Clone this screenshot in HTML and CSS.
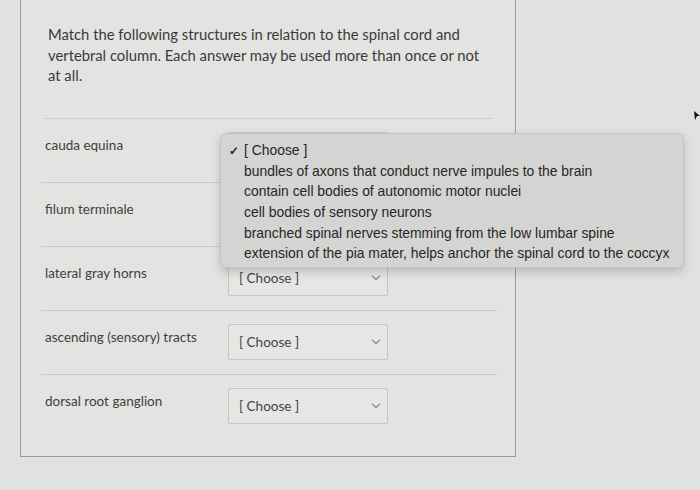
FILE: index.html
```html
<!DOCTYPE html>
<html>
<head>
<meta charset="utf-8">
<link rel="stylesheet" href="styles.css">
</head>
<body>
<div class="panel">
  <p class="question">Match the following structures in relation to the spinal cord and vertebral column. Each answer may be used more than once or not at all.</p>
  <div class="rule"></div>
  <div class="row"><span class="label">cauda equina</span><div class="select"><span>[ Choose ]</span><span class="chev"></span></div></div>
  <div class="row"><span class="label">filum terminale</span><div class="select"><span>[ Choose ]</span><span class="chev"></span></div></div>
  <div class="row"><span class="label">lateral gray horns</span><div class="select"><span>[ Choose ]</span><span class="chev"></span></div></div>
  <div class="row"><span class="label">ascending (sensory) tracts</span><div class="select"><span>[ Choose ]</span><span class="chev"></span></div></div>
  <div class="row last"><span class="label">dorsal root ganglion</span><div class="select"><span>[ Choose ]</span><span class="chev"></span></div></div>
</div>
<div class="menu">
  <div class="item checked"><span class="check">✓</span>[ Choose ]</div>
  <div class="item">bundles of axons that conduct nerve impules to the brain</div>
  <div class="item">contain cell bodies of autonomic motor nuclei</div>
  <div class="item">cell bodies of sensory neurons</div>
  <div class="item">branched spinal nerves stemming from the low lumbar spine</div>
  <div class="item">extension of the pia mater, helps anchor the spinal cord to the coccyx</div>
</div>
<svg class="cursor" width="6" height="10" viewBox="0 0 6 10"><path d="M0 0 L6 5 L3 5 L1 9 Z" fill="#111"/></svg>
</body>
</html>
```
FILE: styles.css
```css
html, body {
  margin: 0;
  padding: 0;
}
body {
  width: 700px;
  height: 490px;
  background: #e1e1df;
  font-family: Lato, "Liberation Sans", sans-serif;
  color: #3d3d3d;
  position: relative;
  overflow: hidden;
}
.panel {
  margin-left: 20px;
  margin-top: -2px;
  width: 496px;
  height: 459px;
  box-sizing: border-box;
  border: 1px solid #9c9c9c;
  background: #e3e3e2;
}
.question {
  margin: 0;
  width: 445px;
  padding: 25px 0 0 27px;
  font-size: 14.8px;
  line-height: 20.5px;
  color: #3a3a3a;
}
.rule {
  margin: 32px 22px 0 23px;
  border-top: 1px solid #cdcdcc;
}
.row {
  display: flex;
  align-items: center;
  margin: 0 18px 0 20px;
  padding: 13px 0 14px;
  border-bottom: 1px solid #cbcbca;
}
.row.last {
  border-bottom: none;
}
.label {
  width: 183px;
  padding-left: 4px;
  padding-bottom: 9px;
  font-size: 13.5px;
  color: #3f3f3f;
}
.select {
  width: 160px;
  height: 36px;
  box-sizing: border-box;
  border: 1px solid #c4c4c3;
  border-radius: 2px;
  background: #e6e6e5;
  display: flex;
  align-items: center;
  justify-content: space-between;
  padding: 0 8px 0 10px;
  font-size: 13.5px;
  color: #444;
}
.chev {
  width: 5px;
  height: 5px;
  border-right: 1.3px solid #777;
  border-bottom: 1.3px solid #777;
  transform: rotate(45deg);
  margin-top: -3px;
}
.menu {
  position: absolute;
  left: 220px;
  top: 133px;
  width: 464px;
  height: 135px;
  box-sizing: border-box;
  padding: 6px 0 0 23px;
  background: #d4d4d3;
  border: 1px solid #c4c4c4;
  border-radius: 6px;
  box-shadow: 0 4px 10px rgba(0,0,0,0.18);
  font-family: "Liberation Sans", Arial, sans-serif;
  font-size: 13.9px;
  color: #262626;
}
.item {
  height: 20.7px;
  line-height: 20.7px;
  white-space: nowrap;
}
.item.checked {
  margin-left: -15px;
}
.check {
  display: inline-block;
  width: 15px;
  font-size: 12px;
  font-weight: bold;
}
.cursor {
  position: absolute;
  left: 694px;
  top: 111px;
}
```
